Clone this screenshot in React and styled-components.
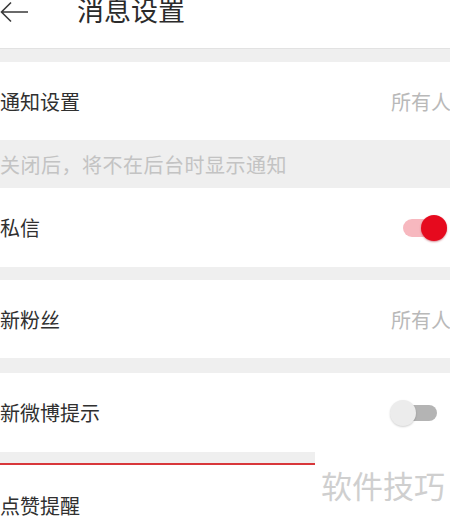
import React from 'react';
import styled, { createGlobalStyle } from 'styled-components';

const GlobalStyle = createGlobalStyle`
  html, body {
    margin: 0;
    padding: 0;
    background: #ffffff;
  }
  body {
    font-family: "Noto Sans CJK SC", "Noto Sans", sans-serif;
  }
`;

const Screen = styled.div`
  position: relative;
  width: 450px;
  height: 520px;
  overflow: hidden;
  background: #ffffff;
`;

const Header = styled.div`
  display: flex;
  align-items: flex-start;
  height: 48px;
  background: #ffffff;
`;

const BackIcon = styled.svg`
  flex: none;
  width: 30px;
  height: 24px;
`;

const Title = styled.div`
  margin-left: 47px;
  margin-top: -5px;
  font-size: 27px;
  line-height: 30px;
  color: #2b2b2b;
`;

const Band = styled.div`
  height: ${(p) => p.$h}px;
  background: #efefef;
  border-top: ${(p) => (p.$shadow ? '1px solid #e2e2e2' : 'none')};
  border-bottom: ${(p) => (p.$red ? '2px solid #d8373a' : 'none')};
  box-sizing: border-box;
`;

const Notice = styled.div`
  display: flex;
  align-items: center;
  height: 48px;
  background: #efefef;
  font-size: 20px;
  letter-spacing: 0.5px;
  color: #c3c3c3;
`;

const Row = styled.div`
  display: flex;
  align-items: center;
  justify-content: space-between;
  height: ${(p) => p.$h}px;
  background: #ffffff;
`;

const Label = styled.span`
  font-size: 20px;
  color: #303030;
`;

const Value = styled.span`
  font-size: 20px;
  color: #b9b9b9;
  margin-right: -1px;
`;

const Toggle = styled.div`
  position: relative;
  flex: none;
  width: ${(p) => (p.$on ? 46 : 47)}px;
  height: 26px;
  margin-right: ${(p) => (p.$on ? 3 : 13)}px;
`;

const Track = styled.div`
  position: absolute;
  left: ${(p) => (p.$on ? 2 : 13)}px;
  right: 0;
  top: ${(p) => (p.$on ? 4 : 5)}px;
  height: ${(p) => (p.$on ? 18 : 16)}px;
  border-radius: 9px;
  background: ${(p) => (p.$on ? '#f7b8bf' : '#b4b4b4')};
`;

const Knob = styled.div`
  position: absolute;
  top: 0;
  ${(p) => (p.$on ? 'right: 0;' : 'left: 0;')}
  width: 26px;
  height: 26px;
  border-radius: 50%;
  background: ${(p) => (p.$on ? '#e60a1e' : '#ececec')};
  box-shadow: ${(p) =>
    p.$on ? '0 1px 2px rgba(160, 0, 20, 0.45)' : '0 1px 2px rgba(0, 0, 0, 0.18)'};
`;

const Watermark = styled.div`
  position: absolute;
  right: 0;
  bottom: 0;
  width: 135px;
  height: 68px;
  background: #ffffff;
  display: flex;
  align-items: flex-start;
  justify-content: flex-end;
  padding-right: 5px;
  padding-top: 11px;
  box-sizing: border-box;
  font-size: 31px;
  line-height: 44px;
  color: #cfcfcf;
`;

function Switch({ on }) {
  return (
    <Toggle $on={on}>
      <Track $on={on} />
      <Knob $on={on} />
    </Toggle>
  );
}

const rows = [
  { kind: 'row', h: 78, label: '通知设置', value: '所有人' },
  { kind: 'notice', text: '关闭后，将不在后台时显示通知' },
  { kind: 'row', h: 79, label: '私信', toggle: true },
  { kind: 'band', h: 13 },
  { kind: 'row', h: 78, label: '新粉丝', value: '所有人' },
  { kind: 'band', h: 15 },
  { kind: 'row', h: 79, label: '新微博提示', toggle: false },
  { kind: 'band', h: 13, red: true },
  { kind: 'row', h: 80, label: '点赞提醒' },
];

export default function App() {
  return (
    <Screen>
      <GlobalStyle />
      <Header>
        <BackIcon viewBox="0 0 30 24">
          <path
            d="M28 12H1.5M11 2.5L1.5 12L11 21.5"
            fill="none"
            stroke="#3a3a3a"
            strokeWidth="1.6"
          />
        </BackIcon>
        <Title>消息设置</Title>
      </Header>
      <Band $h={14} $shadow />
      {rows.map((r, i) => {
        if (r.kind === 'notice') return <Notice key={i}>{r.text}</Notice>;
        if (r.kind === 'band') return <Band key={i} $h={r.h} $red={r.red} />;
        return (
          <Row key={i} $h={r.h}>
            <Label>{r.label}</Label>
            {r.value && <Value>{r.value}</Value>}
            {r.toggle !== undefined && <Switch on={r.toggle} />}
          </Row>
        );
      })}
      <Watermark>软件技巧</Watermark>
    </Screen>
  );
}
